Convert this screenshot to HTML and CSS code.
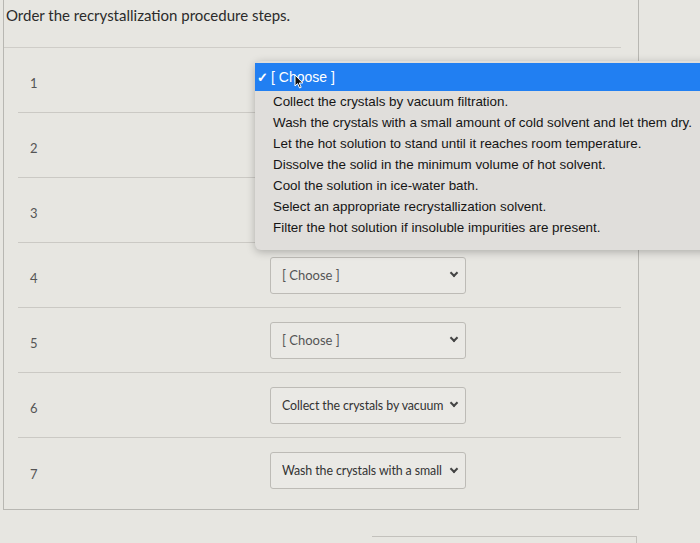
FILE: index.html
```html
<!DOCTYPE html>
<html lang="en">

<head>
    <meta charset="UTF-8">
    <meta name="viewport" content="width=device-width, initial-scale=1.0">
    <title>Order the steps</title>
    <link rel="stylesheet" href="styles.css">
</head>

<body>
    <div class="question">
        <div class="question-header">Order the recrystallization procedure steps.</div>
        <div class="answers">
            <div class="answer-row">
                <div class="step-num">1</div>
                <div class="select covered"></div>
            </div>
            <div class="answer-row">
                <div class="step-num">2</div>
                <div class="select covered"></div>
            </div>
            <div class="answer-row">
                <div class="step-num">3</div>
                <div class="select covered"></div>
            </div>
            <div class="answer-row">
                <div class="step-num">4</div>
                <div class="select placeholder"><span class="select-text">[ Choose ]</span><span class="chevron"></span></div>
            </div>
            <div class="answer-row">
                <div class="step-num">5</div>
                <div class="select placeholder"><span class="select-text">[ Choose ]</span><span class="chevron"></span></div>
            </div>
            <div class="answer-row">
                <div class="step-num">6</div>
                <div class="select"><span class="select-text small">Collect the crystals by vacuum</span><span class="chevron"></span></div>
            </div>
            <div class="answer-row last">
                <div class="step-num">7</div>
                <div class="select"><span class="select-text small">Wash the crystals with a small</span><span class="chevron"></span></div>
            </div>
        </div>
    </div>
    <div class="next-block"></div>

    <div class="dropdown">
        <div class="option selected"><span class="check">✓</span>[ Choose ]
            <svg class="cursor" width="10" height="15" viewBox="0 0 10 15">
                <path d="M1 1 L1 12 L3.6 9.6 L5.6 14 L7.2 13.3 L5.3 9 L8.8 9 Z" fill="#111" stroke="#fff" stroke-width="1"/>
            </svg>
        </div>
        <div class="option">Collect the crystals by vacuum filtration.</div>
        <div class="option">Wash the crystals with a small amount of cold solvent and let them dry.</div>
        <div class="option">Let the hot solution to stand until it reaches room temperature.</div>
        <div class="option">Dissolve the solid in the minimum volume of hot solvent.</div>
        <div class="option">Cool the solution in ice-water bath.</div>
        <div class="option">Select an appropriate recrystallization solvent.</div>
        <div class="option">Filter the hot solution if insoluble impurities are present.</div>
    </div>
</body>

</html>
```

FILE: styles.css
```css
body {
    margin: 0;
    padding: 0;
    font-family: Lato, "Liberation Sans", sans-serif;
    background-color: #e7e6e1;
    color: #2d2d2d;
    overflow: hidden;
}

.question {
    margin-left: 3px;
    width: 634px;
    border-left: 1px solid #b8b7b2;
    border-right: 1px solid #b8b7b2;
    border-bottom: 1px solid #b8b7b2;
    padding-bottom: 6px;
}

.question-header {
    height: 48px;
    box-sizing: border-box;
    padding: 6px 0 0 2px;
    margin-right: 17px;
    font-size: 15px;
    color: #2b2b2b;
    border-bottom: 1px solid #cfcdc8;
}

.answers {
    margin: 0 17px 0 14px;
}

.answer-row {
    display: grid;
    grid-template-columns: 252px 196px;
    align-items: center;
    height: 65px;
    box-sizing: border-box;
    border-bottom: 1px solid #cbc9c4;
}

.answer-row.last {
    border-bottom: none;
}

.step-num {
    padding: 6px 0 0 12px;
    font-size: 13px;
    color: #555;
}

.select {
    display: flex;
    align-items: center;
    height: 37px;
    box-sizing: border-box;
    padding: 0 6px 0 11px;
    border: 1px solid #bdbbb6;
    border-radius: 3px;
    background-color: #eae9e5;
    font-size: 13px;
    color: #333;
}

.select.covered {
    visibility: hidden;
}

.select.placeholder {
    color: #555;
}

.select-text {
    flex: 1;
    white-space: nowrap;
    overflow: hidden;
}

.select-text.small {
    font-size: 12.4px;
    letter-spacing: -0.1px;
}

.chevron {
    width: 4px;
    height: 4px;
    margin: -4px 2px 0 6px;
    border-right: 2px solid #444;
    border-bottom: 2px solid #444;
    transform: rotate(45deg);
    flex-shrink: 0;
}

.next-block {
    margin: 26px 0 0 372px;
    width: 264px;
    height: 20px;
    border-top: 1px solid #c3c1bc;
    border-right: 1px solid #c3c1bc;
}

.dropdown {
    position: absolute;
    left: 255px;
    top: 61px;
    width: 460px;
    padding: 2px 0 12px 0;
    background-color: #e0dedb;
    border-radius: 6px;
    box-shadow: 0 2px 8px rgba(0, 0, 0, 0.25);
    font-family: "Liberation Sans", Arial, sans-serif;
    font-size: 13.4px;
    color: #151515;
}

.option {
    height: 21px;
    line-height: 21px;
    padding-left: 18px;
    white-space: nowrap;
}

.option.selected {
    position: relative;
    height: 28px;
    line-height: 28px;
    padding-left: 2px;
    background-color: #217ff2;
    color: #fff;
    font-size: 14px;
}

.check {
    display: inline-block;
    width: 14px;
    font-size: 13px;
    font-weight: bold;
}

.cursor {
    position: absolute;
    left: 39px;
    top: 11px;
}
```
